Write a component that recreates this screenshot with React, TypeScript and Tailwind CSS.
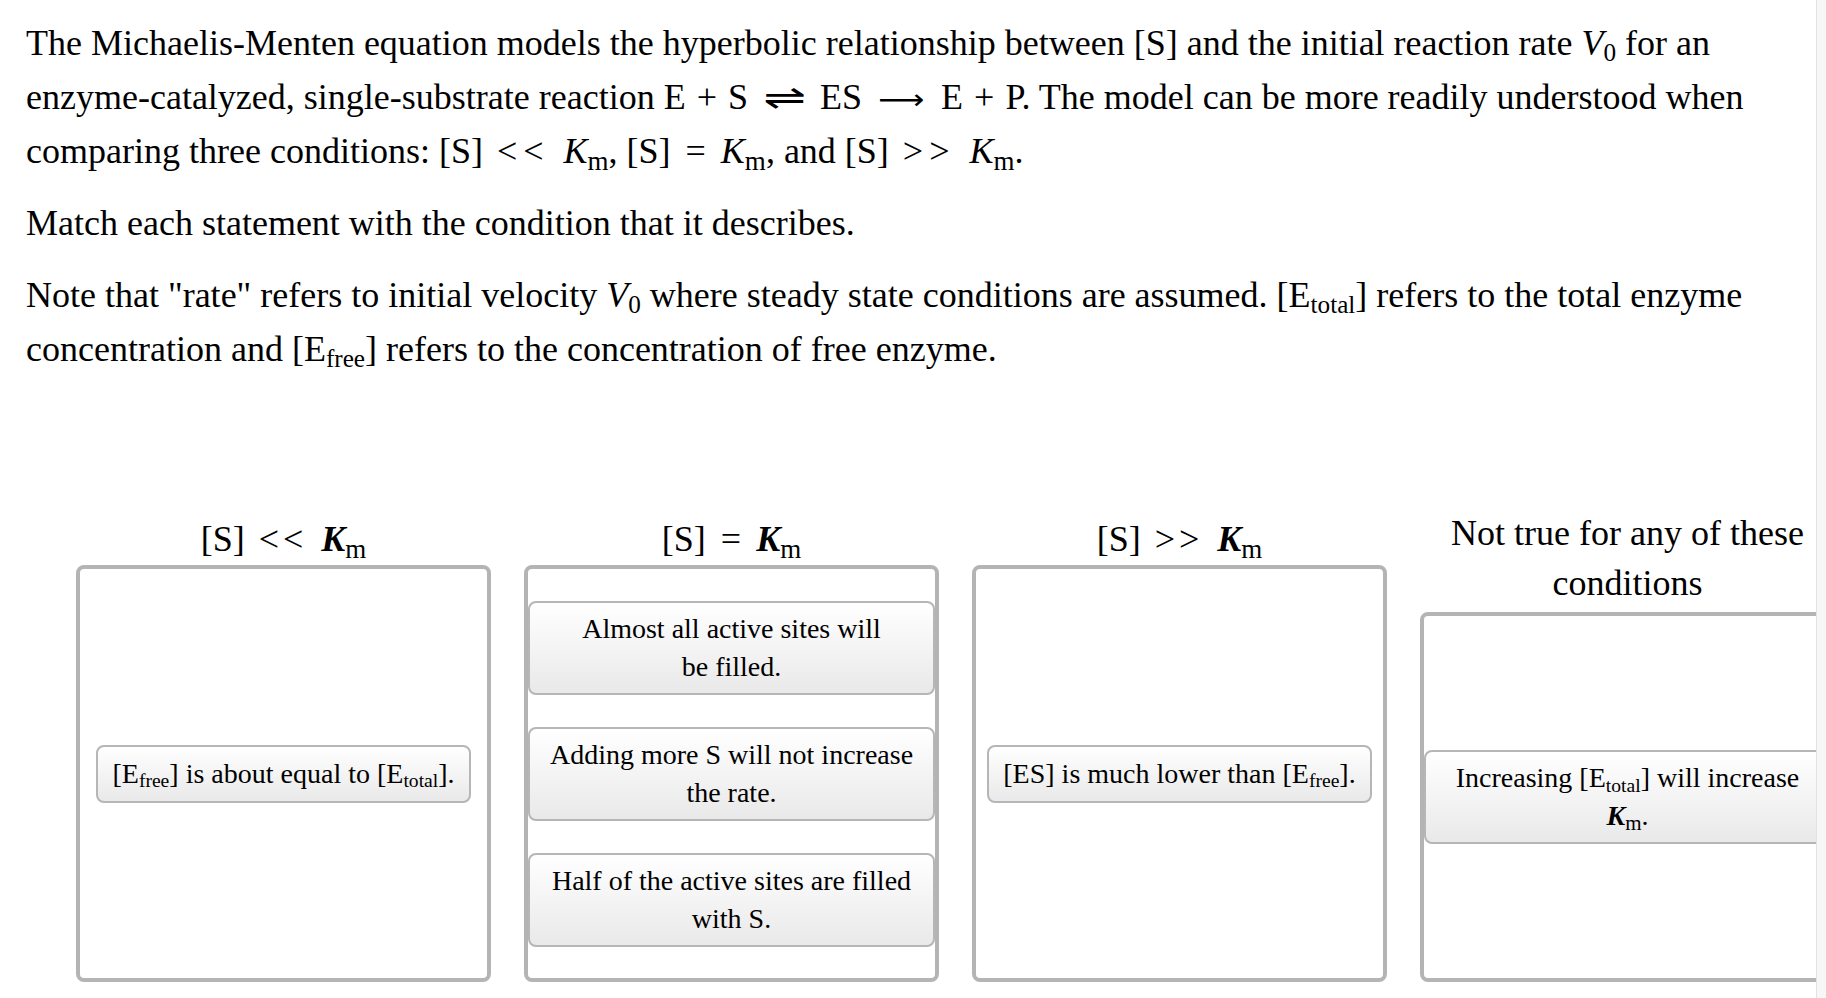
import type { ReactNode } from 'react'

const Km = ({ bold = false }: { bold?: boolean }) => (
  <span className="whitespace-nowrap">
    <span className={bold ? 'italic font-bold' : 'italic'}>K</span>
    <sub>m</sub>
  </span>
)

const Sub = ({ base, sub }: { base: string; sub: string }) => (
  <span className="whitespace-nowrap">
    {base}
    <sub className="text-[70%]">{sub}</sub>
  </span>
)

// relation sign with math-style spacing
const Op = ({ children, wide = false }: { children: ReactNode; wide?: boolean }) => (
  <span className={wide ? 'mx-[5px] tracking-[4px]' : 'mx-[6px]'}>{children}</span>
)

const Plus = () => <span className="mx-[2px]">+</span>

const Card = ({ children, wide = false }: { children: ReactNode; wide?: boolean }) => (
  <div
    className={`${wide ? 'w-full py-[7px]' : 'w-fit max-w-full py-[8px]'} rounded-[8px] border-2 border-[#b6b6b6] bg-linear-to-b from-white to-[#e9e9e9] px-[14px] text-center text-[28px] leading-[38px]`}
  >
    {children}
  </div>
)

const Column = ({
  heading,
  tall = false,
  children,
}: {
  heading: ReactNode
  tall?: boolean
  children: ReactNode
}) => (
  <div className="flex w-[415px] shrink-0 flex-col">
    {/* heading above the drop zone */}
    <div
      className={`${tall ? 'h-[100px]' : 'h-[53px] pt-[6px]'} text-center text-[36px] leading-[50px]`}
    >
      {heading}
    </div>
    <div className="mt-[4px] flex flex-1 flex-col items-center justify-center gap-[32px] rounded-[8px] border-4 border-[#b4b4b4]">
      {children}
    </div>
  </div>
)

export default function App() {
  return (
    <div className="flex h-screen w-full overflow-hidden bg-white font-['Liberation_Serif','Times_New_Roman',serif] text-black">
      <div className="min-w-0 flex-1 overflow-hidden px-[26px] pt-[16px]">
        {/* intro text */}
        <p className="text-[36px] leading-[54px]">
          The Michaelis-Menten equation models the hyperbolic relationship between [S] and the initial
          reaction rate <span className="italic">V</span>
          <sub className="text-[70%]">0</sub> for an enzyme-catalyzed, single-substrate reaction E{' '}
          <Plus /> S
          <span className="mx-[15px] inline-block w-[42px] text-center">
            <span className="inline-block scale-x-[1.5] font-['DejaVu_Sans',sans-serif] text-[34px] leading-none">
              ⇌
            </span>
          </span>
          ES
          <span className="mx-[14px] inline-block w-[51px] text-center">
            <span className="inline-block scale-x-[1.15] font-['DejaVu_Sans',sans-serif] text-[28px] leading-none">
              ⟶
            </span>
          </span>
          E <Plus /> P. The model can be more readily understood when comparing three conditions: [S]{' '}
          <span className="mx-[5px] tracking-[6px]">&lt;&lt;</span> <Km />, [S] <Op>=</Op> <Km />, and
          [S] <span className="mx-[5px] tracking-[6px]">&gt;&gt;</span> <Km />.
        </p>
        <p className="mt-[18px] text-[36px] leading-[54px]">
          Match each statement with the condition that it describes.
        </p>
        <p className="mt-[18px] text-[36px] leading-[54px]">
          Note that "rate" refers to initial velocity <span className="italic">V</span>
          <sub className="text-[70%]">0</sub> where steady state conditions are assumed. [
          <Sub base="E" sub="total" />] refers to the total enzyme concentration and [
          <Sub base="E" sub="free" />] refers to the concentration of free enzyme.
        </p>

        {/* drop zones */}
        <div className="mt-[132px] ml-[50px] flex h-[474px] gap-[33px]">
          <Column
            heading={
              <>
                [S] <Op wide>&lt;&lt;</Op> <Km bold />
              </>
            }
          >
            <Card>
              [<Sub base="E" sub="free" />] is about equal to [<Sub base="E" sub="total" />].
            </Card>
          </Column>

          <Column
            heading={
              <>
                [S] <Op>=</Op> <Km bold />
              </>
            }
          >
            <Card wide>
              Almost all active sites will
              <br />
              be filled.
            </Card>
            <Card wide>
              Adding more S will not increase
              <br />
              the rate.
            </Card>
            <Card wide>
              Half of the active sites are filled
              <br />
              with S.
            </Card>
          </Column>

          <Column
            heading={
              <>
                [S] <Op wide>&gt;&gt;</Op> <Km bold />
              </>
            }
          >
            <Card>
              [ES] is much lower than [<Sub base="E" sub="free" />].
            </Card>
          </Column>

          <Column heading="Not true for any of these conditions" tall>
            <Card wide>
              Increasing [<Sub base="E" sub="total" />] will increase
              <br />
              <Km bold />.
            </Card>
          </Column>
        </div>
      </div>

      {/* scrollbar track */}
      <div className="w-[10px] shrink-0 border-l border-[#e3e3e3] bg-[#f7f7f7]" />
    </div>
  )
}
